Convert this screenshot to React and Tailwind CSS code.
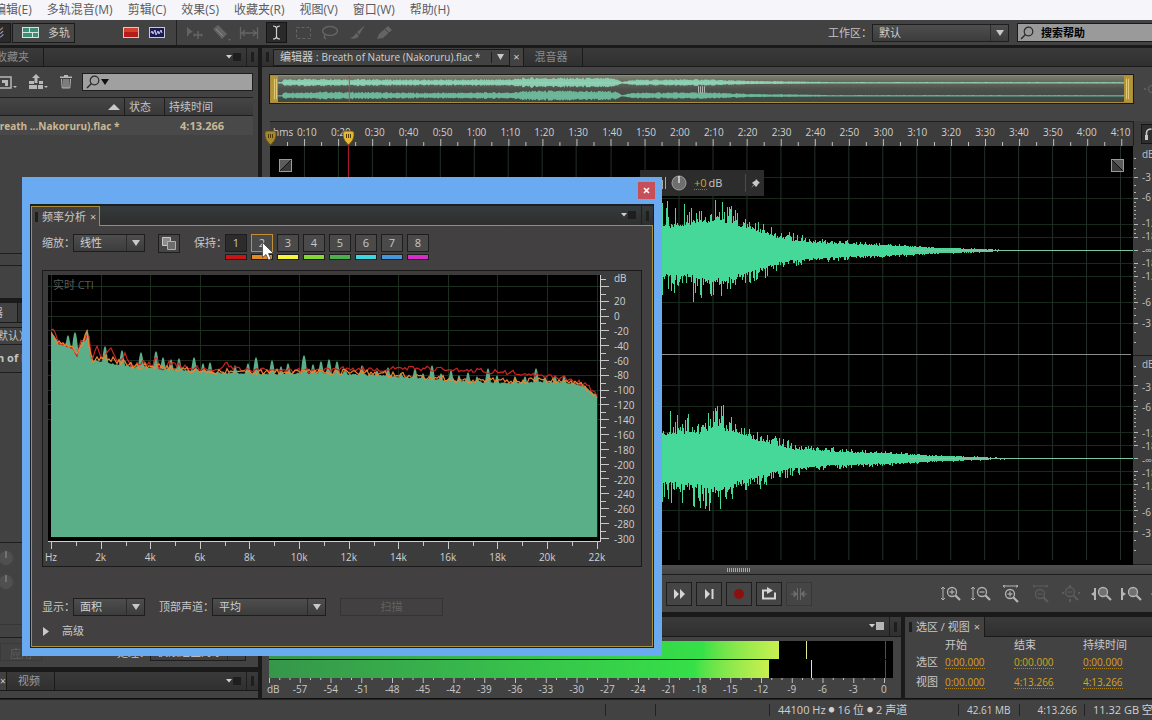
import { useState } from "react";
import clsx from "clsx";

const MENUS = ["编辑(E)", "多轨混音(M)", "剪辑(C)", "效果(S)", "收藏夹(R)", "视图(V)", "窗口(W)", "帮助(H)"];

const HOLDS = [
  { id: 1, color: "bg-[#c81414]" },
  { id: 2, color: "bg-[#e08a28]" },
  { id: 3, color: "bg-[#f4f43c]" },
  { id: 4, color: "bg-[#86d636]" },
  { id: 5, color: "bg-[#4cae4c]" },
  { id: 6, color: "bg-[#3cd6de]" },
  { id: 7, color: "bg-[#4696dc]" },
  { id: 8, color: "bg-[#d62cc8]" },
];

const TIMES = Array.from({ length: 25 }, (_, i) => {
  const s = (i + 1) * 10;
  return `${Math.floor(s / 60)}:${String(s % 60).padStart(2, "0")}`;
});

const LEVELS = Array.from({ length: 20 }, (_, i) => i * 3 - 57);
const SPECTRUM_DB = Array.from({ length: 17 }, (_, i) => 20 - i * 20);
const SPECTRUM_HZ = ["Hz", "2k", "4k", "6k", "8k", "10k", "12k", "14k", "16k", "18k", "20k", "22k"];

const AMP_LABELS = [
  { text: "dB", gap: "mt-[2px]" },
  { text: "-3", gap: "mt-[10px]" },
  { text: "-6", gap: "mt-[7px]" },
  { text: "-12", gap: "mt-[13px]" },
  { text: "-18", gap: "mt-0" },
  { text: "-∞", gap: "mt-[1px]" },
  { text: "-18", gap: "mt-0" },
  { text: "-12", gap: "mt-0" },
  { text: "-6", gap: "mt-[13px]" },
  { text: "-3", gap: "mt-[8px]" },
];

const GRID_OFFSETS = [-73, -52, -26, -13, 13, 26, 52, 73];

// repeatable noise, so the curves look the same on every render
const noise = (n) => {
  const v = Math.sin(n * 12.9898) * 43758.5453;
  return v - Math.floor(v);
};

const lerp = (points, x) => {
  for (let i = 1; i < points.length; i++) {
    const [x0, y0] = points[i - 1];
    const [x1, y1] = points[i];
    if (x <= x1) return y0 + ((y1 - y0) * (x - x0)) / (x1 - x0);
  }
  return points[points.length - 1][1];
};

const BODY = [[0, 24], [390, 24], [420, 26], [450, 31], [468, 25], [500, 16], [520, 10], [560, 7], [620, 5], [660, 3], [690, 2], [735, 0.5], [864, 0.5]];
const PEAK = [[0, 48], [390, 50], [420, 50], [452, 55], [470, 36], [500, 27], [515, 22], [540, 14], [580, 10], [620, 8], [660, 4], [690, 3], [735, 1], [864, 0.5]];

const wavePath = (mid, seed) => {
  const up = [];
  const down = [];
  for (let x = 0; x < 864; x++) {
    const body = lerp(BODY, x);
    const reach = lerp(PEAK, x) - body;
    const a = body * (0.9 + noise(x + seed) * 0.15) + reach * Math.pow(noise(x * 3 + seed), 2.5);
    const b = body * (0.9 + noise(x + seed + 7) * 0.15) + reach * Math.pow(noise(x * 5 + seed), 3);
    up.push(`${x},${(mid - a).toFixed(1)} ${x + 1},${(mid - a).toFixed(1)}`);
    down.unshift(`${x + 1},${(mid + b).toFixed(1)} ${x},${(mid + b).toFixed(1)}`);
  }
  return [...up, ...down].join(" ");
};

const OVERVIEW = [[0, 0], [11, 0.5], [13, 3], [60, 3.5], [150, 2.5], [240, 3], [260, 4.5], [345, 4], [352, 0.5], [362, 2.5], [430, 3], [480, 1.5], [530, 1], [560, 0.4], [863, 0.4]];

const overviewPath = (mid, seed) => {
  const up = [];
  const down = [];
  for (let x = 0; x < 863; x++) {
    const a = lerp(OVERVIEW, x) * (0.7 + noise(x + seed) * 0.6);
    up.push(`${x},${(mid - a).toFixed(1)}`);
    down.unshift(`${x},${(mid + a).toFixed(1)}`);
  }
  return [...up, ...down].join(" ");
};

const SPECTRUM_BASE = [[0, 57], [8, 69], [18, 72], [26, 78], [33, 63], [40, 86], [50, 87], [70, 91], [108, 94], [146, 97], [173, 99], [223, 100], [261, 99], [299, 100], [337, 102], [376, 105], [414, 107], [452, 109], [490, 108], [521, 109], [533, 112], [546, 121]];
const SPECTRUM_PEAKS = [[17, 60], [24, 57], [36, 55], [54, 71], [71, 75], [90, 77], [105, 76], [112, 82], [120, 84], [128, 83], [143, 82], [152, 88], [159, 87], [184, 90], [197, 88], [205, 82], [221, 85], [230, 91], [237, 88], [253, 80], [262, 89], [270, 86], [278, 84], [286, 86], [294, 93], [311, 90], [326, 95], [337, 92], [350, 98], [364, 93], [372, 98], [381, 90], [390, 98], [400, 95], [408, 100], [417, 97], [426, 101], [437, 93], [446, 100], [464, 101], [474, 101], [485, 93], [494, 101], [504, 100], [513, 100]];
const RED = [[0, 55], [4, 57], [9, 69], [18, 72], [26, 80], [30, 65], [34, 64], [37, 55], [41, 85], [46, 73], [52, 84], [60, 75], [67, 88], [74, 80], [80, 92], [92, 87], [102, 90], [105, 76], [108, 96], [118, 88], [130, 91], [160, 95], [173, 92], [175, 86], [180, 93], [192, 95], [220, 95], [260, 96], [290, 94], [330, 94], [346, 93], [390, 94], [414, 95], [450, 97], [480, 99], [505, 102], [525, 106], [536, 111], [546, 120]];
const ORANGE = [[0, 57], [9, 70], [18, 71], [26, 79], [33, 66], [36, 57], [41, 86], [52, 82], [60, 84], [70, 87], [82, 91], [108, 91], [146, 96], [200, 97], [260, 96], [320, 98], [376, 102], [414, 105], [460, 106], [500, 105], [525, 108], [536, 113], [546, 121]];

const spectrumArea = () => {
  const pts = [];
  for (let x = 0; x <= 546; x++) {
    let y = lerp(SPECTRUM_BASE, x) - noise(x) * 2;
    for (const [px, py] of SPECTRUM_PEAKS) y = Math.min(y, py + Math.pow(Math.abs(x - px), 2) * 1.8);
    pts.push(`${x},${y.toFixed(1)}`);
  }
  return `0,262 ${pts.join(" ")} 546,262`;
};

const spectrumLine = (points, seed, wobble) => {
  const pts = [];
  for (let x = 0; x <= 546; x += 2) {
    pts.push(`${x},${(lerp(points, x) + (noise(x + seed) - 0.5) * wobble).toFixed(1)}`);
  }
  return pts.join(" ");
};

function Select({ label, value, width, className }) {
  return (
    <span className={clsx("relative flex h-[18px] shrink-0 border border-[#1e1e1e] bg-linear-to-b from-[#4e4e4e] to-[#3c3c3c]", width, className)}>
      <select aria-label={label} className="w-full appearance-none bg-transparent pl-[6px] leading-4 text-[#d0d0d0] outline-none">
        <option>{value}</option>
      </select>
      <span className="pointer-events-none absolute inset-y-0 right-0 flex w-[18px] items-center justify-center border-l border-[#2c2c2c]">
        <svg width="8" height="6" viewBox="0 0 8 6"><path d="M0 0h8L4 6z" fill="#c8c8c8" /></svg>
      </span>
    </span>
  );
}

function PanelMenu({ light }) {
  return (
    <button type="button" aria-label="面板菜单" className="flex items-center">
      <svg width="16" height="9" viewBox="0 0 16 9">
        <path d="M0 2h6L3 5.500z" fill="#d0d0d0" />
        <rect x="7" y="0" width="8" height="8" fill={light ? "#b4b4b4" : "#1e1e1e"} />
      </svg>
    </button>
  );
}

function Grip() {
  return <span className="h-[10px] w-[3px] shrink-0 bg-[#1e1e1e]" />;
}

// right end of every tab strip: menu button, divider, grip
function StripEnd({ light }) {
  return (
    <div className="ml-auto flex h-full items-center">
      <PanelMenu light={light} />
      <span className="ml-[4px] mr-[4px] h-full w-px bg-[#1e1e1e]" />
      <Grip />
    </div>
  );
}

function Knob({ dim }) {
  return (
    <svg width="16" height="16" viewBox="0 0 16 16" className="shrink-0">
      <circle cx="8" cy="8" r="7" fill={dim ? "#505050" : "#6e6e6e"} stroke={dim ? "#4a4a4a" : "#a0a0a0"} />
      <path d="M8 1v7" stroke={dim ? "#7e7e7e" : "#e0e0e0"} strokeWidth="1.5" />
    </svg>
  );
}

function Lens({ x = 0, plus, minus, fill = "none" }) {
  return (
    <g transform={`translate(${x} 0)`} fill="none" stroke="currentColor">
      <circle cx="8" cy="7" r="4.500" fill={fill} strokeWidth="1.300" />
      <path d="M11.500 10.500 16 15" strokeWidth="2.200" />
      {(plus || minus) && <path d="M5.500 7h5" strokeWidth="1.200" />}
      {plus && <path d="M8 4.500v5" strokeWidth="1.200" />}
    </g>
  );
}

function SearchIcon({ className }) {
  return (
    <svg width="14" height="14" viewBox="0 0 14 14" className={clsx("shrink-0", className)}>
      <circle cx="8.5" cy="5.500" r="4.300" fill="none" stroke="#2a2a2a" strokeWidth="1.200" />
      <path d="M5.500 8.500L1 13" stroke="#2a2a2a" strokeWidth="1.500" />
    </svg>
  );
}

function ZoomButton({ label, dim, children }) {
  return (
    <button type="button" aria-label={label} className={clsx("flex w-[30px] shrink-0 justify-center", dim ? "text-[#5c5c5c]" : "text-[#b4b4b4]")}>
      <svg width="21" height="18" viewBox="0 0 21 18">{children}</svg>
    </button>
  );
}

// wider than its room: the last button runs off the window's right edge
function ZoomBar() {
  return (
    <div className="-mr-[24px] ml-auto flex items-center">
      <ZoomButton label="放大振幅"><path d="M2 2v13M0 4l2-2 2 2M0 13l2 2 2-2" fill="none" stroke="currentColor" /><Lens x={3} plus /></ZoomButton>
      <ZoomButton label="缩小振幅"><path d="M2 2v13M0 4l2-2 2 2M0 13l2 2 2-2" fill="none" stroke="currentColor" /><Lens x={3} minus /></ZoomButton>
      <ZoomButton label="放大时间"><path d="M2 1h15M4 0 2 1l2 1.500M15 0l2 1-2 1.500" fill="none" stroke="currentColor" /><g transform="translate(1 2)"><Lens plus /></g></ZoomButton>
      <ZoomButton label="缩小时间" dim><path d="M2 1h15M4 0 2 1l2 1.500M15 0l2 1-2 1.500" fill="none" stroke="currentColor" /><g transform="translate(1 2)"><Lens minus /></g></ZoomButton>
      <ZoomButton label="全部缩小" dim><path d="M1 8h2M17 8h2M9 0v2M9 14v3" stroke="currentColor" strokeWidth="2" /><Lens x={1} minus /></ZoomButton>
      <ZoomButton label="放大入点"><path d="M5 3H3v4L0 9l3 2v4h2z" fill="currentColor" /><Lens x={4} fill="#707070" /></ZoomButton>
      <ZoomButton label="放大出点"><path d="M0 3h2v4l3 2-3 2v4H0z" fill="currentColor" /><Lens x={4} fill="#707070" /></ZoomButton>
      <ZoomButton label="缩放至选区"><path d="M5 3H3v4L0 9l3 2v4h2z" fill="currentColor" /><Lens x={4} fill="#707070" /></ZoomButton>
    </div>
  );
}

function TransportButton({ label, dim, children }) {
  return (
    <button
      type="button"
      aria-label={label}
      className={clsx(
        "flex h-[24px] w-[26px] shrink-0 items-center justify-center border bg-[#454545]",
        dim ? "border-[#383838] text-[#6a6a6a]" : "border-[#1e1e1e] text-[#d6d6d6]"
      )}
    >
      <svg width="16" height="14" viewBox="0 0 16 14">{children}</svg>
    </button>
  );
}

function Toolbar() {
  return (
    <div className="flex h-[28px] shrink-0 items-center border-b-3 border-[#1a1a1a] bg-[#424242]">
      <button type="button" className="flex h-[20px] w-[11px] items-center justify-end overflow-hidden whitespace-nowrap border border-l-0 border-[#1a1a1a] bg-[#2a2a2a] pr-[6px] text-[#b0b0b0]">波形</button>
      <button type="button" className="ml-px flex h-[20px] w-[63px] items-center gap-[9px] border border-[#1a1a1a] bg-[#484848] pl-[9px] text-[#c8c8c8]">
        <svg width="17" height="11" viewBox="0 0 17 11">
          <rect width="17" height="11" fill="#d4e4de" />
          <path d="M1 1h6v4H1zM8 1h8v4H8zM1 6h9v4H1zM11 6h5v4h-5z" fill="#3f8f78" />
        </svg>
        多轨
      </button>
      <div className="flex h-full w-[102px] items-center gap-[10px] border-r border-[#222] pl-[48px]">
        <svg width="16" height="11" viewBox="0 0 16 11">
          <rect x=".5" y=".5" width="15" height="10" fill="#b81c18" stroke="#dcc8c8" />
          <rect x="1" y="1" width="14" height="4" fill="#d8402e" />
        </svg>
        <svg width="16" height="11" viewBox="0 0 16 11">
          <rect x=".5" y=".5" width="15" height="10" fill="#1c1a50" stroke="#c8c8dc" />
          <path d="M2 6l1-2 1 3 2-4 1 5 2-4 1 3 2-4 1 3" fill="none" stroke="#c4c8f0" />
        </svg>
      </div>
      <div className="flex items-center gap-[5px] pl-[8px] text-[#646464]">
        <button type="button" aria-label="移动工具" className="w-[22px]">
          <svg width="20" height="16" viewBox="0 0 20 16"><path d="M2 2l6 5-3 1-3 4z" fill="currentColor" /><path d="M9 10h8M13 6v8" stroke="currentColor" strokeWidth="1.500" /><path d="M8 10l2-2v4zM18 10l-2-2v4z" fill="currentColor" /></svg>
        </button>
        <button type="button" aria-label="切断工具" className="w-[22px]">
          <svg width="20" height="16" viewBox="0 0 20 16"><path d="M1 4l5-4 9 9-5 5z" fill="currentColor" /><path d="M4 4l7 7" stroke="#8c8c8c" /><path d="M16 14h3l-1.500 2z" fill="currentColor" /></svg>
        </button>
        <button type="button" aria-label="滑动工具" className="w-[22px]">
          <svg width="20" height="14" viewBox="0 0 20 14"><path d="M1.500 1v12M18.500 1v12M2 7h16M6 4L3 7l3 3M14 4l3 3-3 3" fill="none" stroke="currentColor" strokeWidth="1.300" /></svg>
        </button>
        <button type="button" aria-label="时间选区工具" className="flex h-[21px] w-[21px] items-center justify-center border border-[#141414] bg-[#2a2a2a] text-[#d0d0d0]">
          <svg width="9" height="15" viewBox="0 0 9 15"><path d="M1 1q3 0 3.500 2Q5 1 8 1M4.500 2v11M1 14q3 0 3.500-2Q5 14 8 14" fill="none" stroke="currentColor" strokeWidth="1.200" /></svg>
        </button>
        <button type="button" aria-label="框选工具" className="flex w-[22px] justify-center">
          <svg width="15" height="12" viewBox="0 0 15 12"><rect x=".5" y=".5" width="14" height="11" fill="none" stroke="currentColor" strokeDasharray="3 2" /></svg>
        </button>
        <button type="button" aria-label="套索工具" className="flex w-[22px] justify-center">
          <svg width="18" height="15" viewBox="0 0 18 15"><ellipse cx="9" cy="6" rx="7.500" ry="4.500" fill="none" stroke="currentColor" strokeWidth="1.500" /><path d="M4 10q-2 2 1 4" fill="none" stroke="currentColor" strokeWidth="1.500" /></svg>
        </button>
        <button type="button" aria-label="画笔选择工具" className="flex w-[22px] justify-center">
          <svg width="17" height="15" viewBox="0 0 17 15"><path d="M16 0L8 7l2 3zM7 8l3 3q-3 4-9 2 4-1 6-5z" fill="currentColor" /></svg>
        </button>
        <button type="button" aria-label="污点修复刷工具" className="flex w-[22px] justify-center">
          <svg width="17" height="15" viewBox="0 0 17 15"><path d="M1 14l2-5 9-8 4 4-9 8z" fill="currentColor" /><path d="M9 4l4 4" stroke="#424242" /></svg>
        </button>
      </div>
      <div className="ml-auto flex items-center">
        <span className="text-[#c4c4c4]">工作区：</span>
        <Select label="工作区" value="默认" width="w-[137px]" />
        <label className="ml-[8px] flex h-[19px] w-[135px] items-center border border-r-0 border-[#1a1a1a] bg-[#9a9a9a] pl-[2px]">
          <SearchIcon />
          <input aria-label="搜索帮助" defaultValue="搜索帮助" className="ml-[7px] w-full min-w-0 bg-transparent font-bold text-black outline-none" />
        </label>
      </div>
    </div>
  );
}

function FilesPanel() {
  return (
    <section className="flex h-[250px] shrink-0 flex-col bg-[#424242]">
      <div className="flex h-[19px] shrink-0 items-center border-b border-[#1a1a1a] bg-linear-to-b from-[#3a3a3a] to-[#303030] pr-[4px]">
        <div className="flex h-full w-[44px] items-center justify-end border-r border-[#1a1a1a] pr-[14px] text-[#8c8c8c]">
          <span className="whitespace-nowrap">收藏夹</span>
        </div>
        <StripEnd />
      </div>
      <div className="flex h-[30px] shrink-0 items-center pr-[5px] text-[#b8b8b8]">
        <button type="button" aria-label="新建文件" className="w-[28px]">
          <svg width="17" height="13" viewBox="0 0 17 13"><path d="M0 1h11v11H0" fill="none" stroke="currentColor" strokeWidth="1.500" /><path d="M2 4h6v6H5V7H2z" fill="currentColor" /><path d="M13 10h4l-2 2z" fill="currentColor" /></svg>
        </button>
        <button type="button" aria-label="插入到多轨" className="w-[32px]">
          <svg width="20" height="16" viewBox="0 0 20 16"><path d="M1 7h5v3H1zM11 7h4v3h-4zM1 11h8v4H1zM10 11h5v4h-5z" fill="currentColor" /><path d="M8 0l4 4H9.500v5h-3V4H4z" fill="currentColor" /><path d="M16 12h4l-2 2z" fill="currentColor" /></svg>
        </button>
        <button type="button" aria-label="删除" className="w-[22px]">
          <svg width="12" height="14" viewBox="0 0 12 14"><path d="M4 0h4v1.500h4V3H0V1.500h4z" fill="currentColor" /><path d="M1.500 4l.7 9h7.600l.7-9M4 4v9M6 4v9M8 4v9" fill="none" stroke="currentColor" /></svg>
        </button>
        <label className="flex h-[18px] flex-1 items-center border border-[#1e1e1e] bg-[#a0a0a0] pl-[3px]">
          <SearchIcon />
          <svg width="9" height="6" viewBox="0 0 9 6" className="shrink-0"><path d="M1 0h8L5 6z" fill="#111" /></svg>
          <input aria-label="搜索文件" className="w-full min-w-0 bg-transparent text-black outline-none" />
        </label>
      </div>
      <table className="mr-[5px] border-separate border-spacing-0 text-left text-[#c4c4c4]">
        <thead>
          <tr className="h-[19px] bg-linear-to-b from-[#464646] to-[#383838] leading-[16px]">
            <th className="w-[124px] border-y border-[#1e1e1e] p-0">
              <svg width="12" height="6" viewBox="0 0 12 6" className="ml-auto mr-[4px]"><path d="M0 6h12L6 0z" fill="#c8c8c8" /></svg>
            </th>
            <th className="w-[40px] border-y border-l border-[#1e1e1e] p-0 pl-[4px] font-normal">状态</th>
            <th className="border-y border-l border-[#1e1e1e] p-0 pl-[4px] font-normal">持续时间</th>
          </tr>
        </thead>
        <tbody>
          <tr className="h-[19px] bg-[#494949] font-bold leading-[18px] text-[#c8b894]">
            <td colSpan={2} className="p-0">
              <span className="-ml-[7px] block whitespace-nowrap text-[10px]">Breath ...Nakoruru).flac *</span>
            </td>
            <td className="p-0 pl-[16px]">4:13.266</td>
          </tr>
        </tbody>
      </table>
      <div className="mr-[5px] flex-1 border-b border-[#1e1e1e]" />
      <div className="mr-[5px] h-[12px] border-b border-[#1e1e1e]" />
      <div className="h-[32px]" />
    </section>
  );
}

function EffectsPanel() {
  return (
    <section className="flex min-h-0 flex-1 flex-col bg-[#424242] text-[#c4c4c4]">
      <div className="flex h-[20px] shrink-0 items-center border-b border-[#1a1a1a] bg-[#343434]">
        <div className="flex h-full w-[18px] items-center justify-end overflow-hidden border-r border-[#1a1a1a] bg-[#424242] pr-[14px]">
          <span>器</span>
        </div>
      </div>
      <div className="mt-[4px] flex h-[18px] shrink-0 items-center border-y border-[#1e1e1e]">
        <span className="-ml-[3px] whitespace-nowrap">默认）</span>
      </div>
      <div className="mt-[6px] flex h-[22px] shrink-0 items-start border-b border-[#1e1e1e] leading-[14px]">
        <span className="-ml-[3px] whitespace-nowrap font-bold">h of N</span>
      </div>
      <div className="flex-1 border-b border-[#1e1e1e]" />
      <div className="-ml-[2px] mt-[7px] flex flex-col gap-[8px]">
        <Knob dim />
        <Knob dim />
      </div>
      <div className="mt-[34px] h-px bg-[#363636]" />
      <div className="mt-[12px] h-px shrink-0 bg-[#1e1e1e]" />
      <div className="mt-[5px] flex h-[24px] shrink-0 items-start pr-[12px] leading-[20px]">
        <button type="button" disabled className="h-[18px] w-[42px] border border-[#3a3a3a] text-[#5e5e5e]">应用</button>
        <span className="ml-auto">处理：</span>
        <Select label="处理" value="仅限选区对象" width="w-[96px]" />
      </div>
    </section>
  );
}

function MediaTabs() {
  return (
    <section className="flex h-[27px] shrink-0 flex-col border-b border-[#111] bg-[#424242]">
      <div className="flex h-[19px] items-center border-b border-[#1a1a1a] bg-linear-to-b from-[#3a3a3a] to-[#303030] pr-[4px]">
        <button type="button" aria-label="关闭" className="flex h-full w-[7px] items-center border-r border-[#1a1a1a] bg-[#424242] text-[10px] text-[#d0d0d0]">×</button>
        <div className="flex h-full w-[48px] items-center border-r border-[#1a1a1a] pl-[11px] text-[#9c9c9c]">视频</div>
        <StripEnd />
      </div>
    </section>
  );
}

function EditorTabs() {
  return (
    <div className="flex h-[19px] shrink-0 items-center border-b border-[#1a1a1a] bg-linear-to-b from-[#3a3a3a] to-[#303030] pl-[4px]">
      <Grip />
      <div className="ml-[4px] flex h-full items-center border-r border-[#1a1a1a] bg-[#424242] text-[#d0d0d0]">
        <div className="flex h-[17px] w-[237px] items-center border border-[#1a1a1a] pl-[6px]">
          <span className="whitespace-nowrap">编辑器 : <span className="text-[10px]">Breath of Nature (Nakoruru).flac *</span></span>
          <button type="button" aria-label="文件列表" className="ml-auto flex h-[11px] w-[18px] items-center justify-center border-l border-[#1e1e1e]">
            <svg width="7" height="6" viewBox="0 0 7 6"><path d="M0 0h7L3.500 6z" fill="#c8c8c8" /></svg>
          </button>
        </div>
        <button type="button" aria-label="关闭编辑器" className="w-[13px] text-center">×</button>
      </div>
      <div className="flex h-full w-[59px] items-center justify-center border-r border-[#1a1a1a] pr-[4px] text-[#8c8c8c]">混音器</div>
    </div>
  );
}

function Overview() {
  return (
    <div className="flex h-[30px] min-w-0 flex-1 border border-[#1a1a1a]">
      <div className="flex w-full border border-[#a88c3c] bg-linear-to-b from-[#7c7c6c] via-[#4e504c] to-[#3a4844]">
        <svg className="h-full w-full" viewBox="0 0 863 28" preserveAspectRatio="none">
          <polygon points={overviewPath(7, 2)} fill="#8accb0" />
          <polygon points={overviewPath(21, 40)} fill="#6cb698" />
          <path d="M0 7.500h863" stroke="#94d8ba" />
          <path d="M0 21.500h863" stroke="#74b89c" />
          <rect width="7" height="28" fill="#b49438" />
          <path d="M3.500 3v22M5.500 3v22" stroke="#e4cc78" />
          <rect x="855" width="8" height="28" fill="#b49438" />
          <path d="M857.500 3v22M859.500 3v22" stroke="#e4cc78" />
          <path d="M78.500 0v28" stroke="#c03c4c" />
          <path d="M428.500 11v7M430.500 11v7M432.500 11v7M434.500 11v7" stroke="#b8b8b8" />
        </svg>
      </div>
    </div>
  );
}

function PlayMarker({ dim, className }) {
  return (
    <svg width="13" height="16" viewBox="0 0 13 16" className={className}>
      <path d="M1 3q0-2 2-2h7q2 0 2 2v3q0 4-5.500 9Q1 10 1 6z" fill={dim ? "#a8882c" : "#e6b832"} stroke="#5c4812" strokeWidth=".8" />
      <path d="M4.500 4v4M6.500 4v4M8.500 4v4" stroke="#4c3a08" />
    </svg>
  );
}

function TimeRuler() {
  return (
    <div className="relative h-[25px] min-w-0 flex-1 border-t border-r border-[#1e1e1e] bg-[#3c3c3c]">
      <div className="flex justify-between pr-[12px] pt-[3px] text-[10px] leading-[15px] text-[#d0d0d0]">
        <span className="flex w-0 pl-[3px]">hms</span>
        {TIMES.map((t) => (
          <span key={t} className="flex w-0 justify-center">{t}</span>
        ))}
      </div>
      <svg className="absolute inset-x-0 bottom-0 h-[7px] w-full" viewBox="0 0 863 7" preserveAspectRatio="none">
        {TIMES.map((t, i) => (
          <path key={t} d={`M${(i + 1) * 34.05 + 0.5} 0v7M${(i + 0.5) * 34.05 + 0.5} 3v4`} stroke="#c0c0c0" />
        ))}
      </svg>
      <PlayMarker dim className="absolute -left-[6px] bottom-0" />
      <PlayMarker className="absolute left-[72px] bottom-0" />
    </div>
  );
}

function Waveform() {
  return (
    <div className="relative h-full min-w-0 flex-1 bg-black">
      <svg className="h-full w-full" viewBox="0 0 864 419" preserveAspectRatio="none" shapeRendering="crispEdges">
        {[104, 312].map((mid) => GRID_OFFSETS.map((o) => (
          <path key={mid + o} d={`M0 ${mid + o + 0.5}h864`} stroke="#182a1c" />
        )))}
        {TIMES.map((t, i) => (
          <path key={t} d={`M${Math.round((i + 1) * 34.05) + 0.5} 0v414`} stroke="#243028" />
        ))}
        <polygon points={wavePath(104.5, 11)} fill="#45d898" />
        <polygon points={wavePath(312.5, 53)} fill="#45d898" />
        <path d="M640 104.500h222M640 312.500h222" stroke="#7cc8a4" />
        <path d="M0 208.500h862" stroke="#8c8c8c" />
        <path d="M78.500 0v414" stroke="#c01c34" />
      </svg>
      <svg width="13" height="13" viewBox="0 0 13 13" className="absolute left-[9px] top-[13px]">
        <rect x=".5" y=".5" width="12" height="12" fill="#5c5c5c" stroke="#9a9a9a" />
        <path d="M1 12L12 1v11z" fill="#3a3a3a" />
        <path d="M1 12L12 1" stroke="#111" />
      </svg>
      <svg width="13" height="13" viewBox="0 0 13 13" className="absolute right-[9px] top-[13px]">
        <rect x=".5" y=".5" width="12" height="12" fill="#5c5c5c" stroke="#9a9a9a" />
        <path d="M1 1l11 11H1z" fill="#3a3a3a" />
        <path d="M1 1l11 11" stroke="#111" />
      </svg>
      <div className="absolute left-[370px] top-[24px] flex h-[26px] w-[124px] items-center bg-[#2c2c2c] pl-[21px] text-[11px] text-[#c8c8c8]">
        <svg width="5" height="12" viewBox="0 0 5 12"><path d="M1.500 3v9M4.500 0v12" stroke="#a8a8a8" /></svg>
        <span className="ml-[5px]"><Knob /></span>
        <span className="ml-[7px] border-b border-dotted border-[#a07818] leading-[13px] text-[#d8a420]">+0</span>
        <span className="ml-[2px]">dB</span>
        <span className="ml-auto flex h-[18px] w-[19px] items-center justify-center border-l border-[#4c4c4c]">
          <svg width="9" height="9" viewBox="0 0 9 9"><path d="M5 0l4 4-1.500.5L6 7 5 8 3.500 6 0 9l3-3.500L1 4l1-1 2.500-1.500z" fill="#c8c8c8" /></svg>
        </span>
      </div>
    </div>
  );
}

function AmplitudeScale() {
  return (
    <div className="relative h-full w-[19px] shrink-0 overflow-hidden bg-[#3c3c3c] text-[10px] leading-[13px] text-[#c0c0c0]">
      {["左", "右"].map((ch) => (
        <div key={ch} className="flex h-1/2 flex-col border-b border-[#1e1e1e] pl-[9px]">
          {AMP_LABELS.map((l, i) => (
            <span key={i} className={clsx("whitespace-nowrap", l.gap)}>{l.text}</span>
          ))}
        </div>
      ))}
      <svg className="absolute left-0 top-0 h-full w-[5px]" viewBox="0 0 5 419" preserveAspectRatio="none">
        {[104, 312].map((mid) => (
          <g key={mid} stroke="#b4b4b4">
            {[0, ...GRID_OFFSETS].map((o) => <path key={o} d={`M1 ${mid + o + 0.5}h4`} />)}
            {[17, 21, 32, 36, 40, 44, 48, 58, 65, 82, 92].map((o) => (
              <path key={o} d={`M1 ${mid - o + 0.5}h2M1 ${mid + o + 0.5}h2`} />
            ))}
          </g>
        ))}
      </svg>
    </div>
  );
}

function Editor() {
  return (
    <section className="flex min-h-0 flex-1 flex-col bg-[#444444]">
      <EditorTabs />
      <div className="mt-[7px] flex shrink-0 items-center pl-[7px]">
        <Overview />
        <div className="flex w-[18px] shrink-0 justify-end overflow-hidden">
          <svg width="8" height="10" viewBox="0 0 8 10"><path d="M0 5h2" stroke="#5c5c5c" strokeWidth="2" /><circle cx="8" cy="5" r="3.500" fill="none" stroke="#5c5c5c" strokeWidth="1.500" /></svg>
        </div>
      </div>
      <div className="mt-[17px] flex shrink-0 pl-[8px]">
        <TimeRuler />
        <div className="flex w-[18px] shrink-0 items-center justify-end bg-[#3c3c3c]">
          <button type="button" aria-label="监听" className="h-[20px] w-[11px] border border-r-0 border-[#161616] bg-[#2e2e2e]">
            <svg width="10" height="14" viewBox="0 0 10 14"><path d="M4.500 9V6q0-4 5-4" fill="none" stroke="#c8c8c8" strokeWidth="1.600" /><path d="M3 8h3v5H3z" fill="#c8c8c8" /></svg>
          </button>
        </div>
      </div>
      <div className="flex min-h-0 flex-1 pl-[8px]">
        <Waveform />
        <AmplitudeScale />
      </div>
      <div className="flex h-[10px] shrink-0 items-center justify-center border-b border-[#1e1e1e] bg-linear-to-b from-[#505050] to-[#444] pl-[64px]">
        <svg width="24" height="4" viewBox="0 0 24 4"><path d="M0 2h24" stroke="#a8a8a8" strokeWidth="4" strokeDasharray="1 1" /></svg>
      </div>
      <div className="flex h-[37px] shrink-0 items-center gap-[4px] overflow-hidden pl-[404px]">
        <TransportButton label="快进"><path d="M3 2l5 5-5 5zM9 2l5 5-5 5z" fill="currentColor" /></TransportButton>
        <TransportButton label="移到下一个"><path d="M4 2l5 5-5 5z" fill="currentColor" /><path d="M11.500 2v10" stroke="currentColor" strokeWidth="2" /></TransportButton>
        <TransportButton label="录制"><circle cx="8" cy="7" r="5" fill="#8c1010" /></TransportButton>
        <TransportButton label="循环播放"><path d="M6 3.500H2v8h12V5.500" fill="none" stroke="currentColor" strokeWidth="2" /><path d="M6 0l6 3.500L6 7z" fill="currentColor" /></TransportButton>
        <TransportButton label="跳过所选项目" dim><path d="M6.500 1v12M9.500 1v12" stroke="currentColor" /><path d="M0 7h4M10 7h6M3 4l3 3-3 3zM13 4l-3 3 3 3z" fill="currentColor" stroke="currentColor" /></TransportButton>
        <ZoomBar />
      </div>
    </section>
  );
}

function LevelMeters() {
  const meters = [
    { id: "L", level: 81.7, hold: 86.1 },
    { id: "R", level: 80.1, hold: 86.9 },
  ];
  return (
    <section className="flex min-w-0 flex-1 flex-col border-b border-[#111] bg-[#424242]">
      <div className="flex h-[20px] shrink-0 items-center border-b border-[#1a1a1a] bg-linear-to-b from-[#3a3a3a] to-[#303030] pr-[4px]">
        <StripEnd light />
      </div>
      <div className="mt-[4px] flex flex-col gap-px bg-black ml-[7px] mr-[8px]">
        {meters.map((m) => (
          <div key={m.id} className="relative h-[18px]">
            <div
              className="h-full bg-linear-to-r from-[#36964a] from-0% via-[#35e048] via-85% to-[#c8f050]"
              style={{ width: `${m.level}%` }}
            />
            <span className="absolute inset-y-0 w-px bg-[#e6ec8c]" style={{ left: `${m.hold}%` }} />
            <span className="absolute inset-y-0 left-[98.7%] w-px bg-[#505050]" />
          </div>
        ))}
      </div>
      <svg className="ml-[7px] mr-[8px] h-[6px] shrink-0" viewBox="0 0 624 6" preserveAspectRatio="none">
        {Array.from({ length: 61 }, (_, i) => (
          <path key={i} d={`M${i * 10.25 + 0.5} 0v${i % 3 ? 2 : 5}`} stroke="#c0c0c0" />
        ))}
      </svg>
      <div className="ml-[5px] mr-[17px] flex text-[10px] leading-[11px] text-[#c8c8c8]">
        <span className="w-[33px]">dB</span>
        <div className="flex flex-1 justify-between">
          {LEVELS.map((l) => (
            <span key={l} className="flex w-0 justify-center">{l}</span>
          ))}
        </div>
      </div>
    </section>
  );
}

function TimeValue({ children }) {
  return <button type="button" className="border-b border-dotted border-[#b08418] leading-[12px] text-[#d8a420]">{children}</button>;
}

function SelectionPanel() {
  return (
    <section className="flex w-[247px] shrink-0 flex-col border-b border-[#111] bg-[#424242] text-[#c8c8c8]">
      <div className="flex h-[20px] shrink-0 items-center border-b border-[#1a1a1a] bg-linear-to-b from-[#3a3a3a] to-[#303030]">
        <div className="flex h-[20px] w-[80px] items-center gap-[4px] border-r border-[#1a1a1a] bg-[#424242] pl-[4px]">
          <Grip />
          <span className="whitespace-nowrap">选区 / 视图</span>
          <button type="button" aria-label="关闭">×</button>
        </div>
      </div>
      <table className="ml-[11px] w-[236px] table-fixed text-left">
        <thead>
          <tr className="h-[15px] leading-[15px]">
            <th className="w-[29px] p-0" />
            <th className="w-[69px] p-0 font-normal">开始</th>
            <th className="w-[69px] p-0 font-normal">结束</th>
            <th className="w-[69px] p-0 font-normal">持续时间</th>
          </tr>
        </thead>
        <tbody className="text-[10px] leading-[14px]">
          <tr className="h-[20px]">
            <th className="p-0 text-[11px] font-normal">选区</th>
            <td className="p-0"><TimeValue>0:00.000</TimeValue></td>
            <td className="p-0"><TimeValue>0:00.000</TimeValue></td>
            <td className="p-0"><TimeValue>0:00.000</TimeValue></td>
          </tr>
          <tr className="h-[20px]">
            <th className="p-0 text-[11px] font-normal">视图</th>
            <td className="p-0"><TimeValue>0:00.000</TimeValue></td>
            <td className="p-0"><TimeValue>4:13.266</TimeValue></td>
            <td className="p-0"><TimeValue>4:13.266</TimeValue></td>
          </tr>
        </tbody>
      </table>
    </section>
  );
}

function StatusBar() {
  return (
    <footer className="flex h-[21px] shrink-0 items-center justify-end border-t border-[#222] bg-[#424242] text-[#d0d0d0]">
      <span className="h-[12px] w-[50px] border-l border-[#222]" />
      <span className="h-[12px] w-[114px] border-l border-[#222]" />
      <span className="flex h-[12px] w-[189px] items-center gap-[3px] whitespace-nowrap border-l border-[#222] pl-[8px]">
        44100 Hz <span className="text-[6px]">●</span> 16 位 <span className="text-[6px]">●</span> 2 声道
      </span>
      <span className="flex h-[12px] w-[61px] items-center whitespace-nowrap border-l border-[#222] pl-[8px] text-[10px]">42.61 MB</span>
      <span className="flex h-[12px] w-[65px] items-center justify-end whitespace-nowrap border-l border-[#222] pr-[7px] text-[10px]">4:13.266</span>
      <span className="flex h-[12px] w-[68px] items-center whitespace-nowrap border-l border-[#222] pl-[8px]">11.32 GB 空闲</span>
    </footer>
  );
}

function SpectrumGraph() {
  return (
    <div className="mt-[9px] flex h-[297px] flex-col border border-[#1a1a1a] bg-[#3c3c3c] pl-[5px] pt-[4px] text-[10px] text-[#d0d0d0]">
      <div className="flex h-[266px]">
        <div className="relative w-[552px] shrink-0 bg-black">
          <svg className="h-full w-full" viewBox="-3 0 552 266" preserveAspectRatio="none">
            {SPECTRUM_HZ.map((hz, i) => (
              <path key={hz} d={`M${Math.round(i * 49.6) + 0.5} 0v262`} stroke="#1c2e1e" />
            ))}
            {Array.from({ length: 10 }, (_, i) => (
              <path key={i} d={`M-3 ${Math.round(11 + i * 14.8) + 0.5}h552`} stroke="#1c2e1e" />
            ))}
            <polygon points={spectrumArea()} fill="#5aae88" />
            <polyline points={spectrumLine(RED, 5, 5)} fill="none" stroke="#cc2420" strokeWidth="1.200" />
            <polyline points={spectrumLine(ORANGE, 90, 6)} fill="none" stroke="#f08430" strokeWidth="1.200" />
          </svg>
          <span className="absolute left-[5px] top-[3px] text-[11px] leading-[14px] text-[#5a5a5a]">实时 CTI</span>
        </div>
        <svg width="10" height="266" viewBox="0 0 10 266" className="shrink-0">
          <path d="M.5 0v266" stroke="#d0d0d0" />
          {Array.from({ length: 18 }, (_, i) => (
            <path key={i} d={`M1 ${Math.round(11 + i * 14.8) + 0.5}h8M1 ${Math.round(4 + i * 14.8) + 0.5}h5`} stroke="#c8c8c8" />
          ))}
        </svg>
        <div className="flex flex-1 flex-col pl-[4px] leading-[14px]">
          <span className="-mt-[4px] mb-[9px]">dB</span>
          <div className="-mb-[5px] flex flex-1 flex-col justify-between">
            {SPECTRUM_DB.map((db) => <span key={db}>{db}</span>)}
          </div>
        </div>
      </div>
      <svg width="553" height="9" viewBox="-3 0 553 9" className="shrink-0">
        <path d="M-3 .5h553" stroke="#d0d0d0" />
        {SPECTRUM_HZ.map((hz, i) => (
          <path key={hz} d={`M${Math.round(i * 49.6) + 0.5} 0v8M${Math.round(i * 49.6 + 25) + 0.5} 0v5`} stroke="#c8c8c8" />
        ))}
      </svg>
      <div className="ml-[3px] flex w-[546px] justify-between leading-[15px]">
        {SPECTRUM_HZ.map((hz) => (
          <span key={hz} className="flex w-0 justify-center">{hz}</span>
        ))}
      </div>
    </div>
  );
}

function FrequencyWindow() {
  const [held, setHeld] = useState(1);

  return (
    <div role="dialog" aria-label="频率分析" className="absolute left-[22px] top-[177px] flex w-[640px] flex-col bg-[#6aaaf0] px-[8px] pb-[8px] text-[#c8c8c8]">
      <div className="flex h-[27px] items-center justify-end">
        <button type="button" aria-label="关闭窗口" className="-mr-px flex h-[17px] w-[17px] items-center justify-center bg-[#c75058] text-white">
          <svg width="7" height="7" viewBox="0 0 7 7"><path d="M1 1l5 5M6 1L1 6" stroke="currentColor" strokeWidth="1.600" /></svg>
        </button>
      </div>
      <div className="flex h-[444px] flex-col border border-t-2 border-[#1a2024] bg-[#424040]">
        <div className="flex h-[20px] shrink-0 items-end bg-linear-to-b from-[#343a3a] to-[#2e2e2e]">
          <div className="flex h-full w-[69px] items-center border border-b-0 border-[#a89038] bg-[#444240] pl-[3px]">
            <Grip />
            <span className="ml-[4px]">频率分析</span>
            <button type="button" aria-label="关闭" className="ml-[4px]">×</button>
          </div>
          <div className="flex h-full flex-1 items-center border-b border-[#a89038] pr-[4px]">
            <StripEnd />
          </div>
        </div>
        <div className="flex flex-1 flex-col border border-t-0 border-[#a89038] px-[10px] pt-[8px]">
          <div className="flex h-[27px] items-start leading-[18px]">
            <span className="w-[31px] whitespace-nowrap">缩放：</span>
            <Select label="缩放" value="线性" width="w-[72px]" />
            <button type="button" aria-label="复制到剪贴板" className="ml-[13px] flex h-[19px] w-[22px] items-center justify-center border border-[#1e1e1e] bg-[#464646]">
              <svg width="14" height="13" viewBox="0 0 14 13"><path d="M.5.5h8v8h-8z" fill="#8c8c8c" stroke="#c8c8c8" /><path d="M5.500 4.500h8v8h-8z" fill="#6c6c6c" stroke="#b0b0b0" /></svg>
            </button>
            <span className="ml-[14px] w-[31px] whitespace-nowrap">保持：</span>
            <div className="flex gap-[4px]">
              {HOLDS.map((h) => (
                <div key={h.id} className="flex w-[22px] flex-col gap-[2px]">
                  <button
                    type="button"
                    onClick={() => setHeld(h.id)}
                    className={clsx(
                      "h-[18px] border text-center leading-[16px]",
                      h.id === 2 ? "border-[#c09038]" : "border-[#1e1e1e]",
                      held === h.id ? "bg-[#2c2c2c]" : "bg-[#4a4a4a]"
                    )}
                  >
                    {h.id}
                  </button>
                  <span className={clsx("h-[6px] border border-[#1e1e1e]", h.color)} />
                </div>
              ))}
            </div>
          </div>
          <SpectrumGraph />
          <div className="mt-[31px] flex items-center">
            <span className="w-[31px] whitespace-nowrap">显示：</span>
            <Select label="显示" value="面积" width="w-[72px]" />
            <span className="ml-[14px] w-[53px] whitespace-nowrap">顶部声道：</span>
            <Select label="顶部声道" value="平均" width="w-[114px]" />
            <button type="button" disabled className="ml-[14px] h-[18px] w-[103px] border border-[#343434] leading-[16px] text-[#626262]">扫描</button>
          </div>
          <button type="button" className="mt-[7px] flex items-center gap-[13px] self-start pl-px leading-[16px]">
            <svg width="6" height="9" viewBox="0 0 6 9"><path d="M0 0v9l6-4.500z" fill="#c8c8c8" /></svg>
            高级
          </button>
        </div>
      </div>
      <svg width="12" height="19" viewBox="0 0 12 19" className="absolute left-[240px] top-[65px]">
        <path d="M.5.500v15l3.500-3 2.500 5.500 2.500-1-2.500-5.500h5z" fill="#fff" stroke="#333" strokeWidth=".7" />
      </svg>
    </div>
  );
}

export default function App() {
  return (
    <div className="relative flex h-screen flex-col overflow-hidden bg-[#1a1a1a] font-['Open_Sans','Noto_Sans_CJK_SC',sans-serif] text-[11px] leading-[16px]">
      <nav className="-ml-[6px] flex h-[20px] shrink-0 items-center gap-[15px] bg-[#f5f5fa] text-[12px] text-[#5c5c60]">
        {MENUS.map((m) => (
          <button key={m} type="button" className="whitespace-nowrap">{m}</button>
        ))}
      </nav>
      <Toolbar />
      <main className="flex min-h-0 flex-1 gap-[4px]">
        <div className="flex w-[258px] shrink-0 flex-col gap-[5px]">
          <FilesPanel />
          <EffectsPanel />
          <MediaTabs />
        </div>
        <div className="flex min-w-0 flex-1 flex-col gap-[5px]">
          <Editor />
          <div className="flex h-[82px] shrink-0 gap-[4px]">
            <LevelMeters />
            <SelectionPanel />
          </div>
        </div>
      </main>
      <StatusBar />
      <FrequencyWindow />
    </div>
  );
}
